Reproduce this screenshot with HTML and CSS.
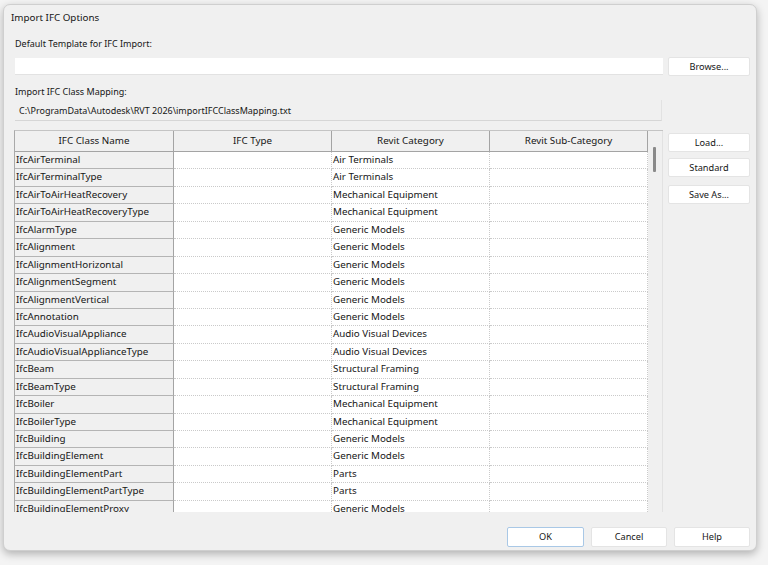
FILE: index.html
```html
<!DOCTYPE html>
<html>
<head>
<meta charset="utf-8">
<link rel="stylesheet" href="styles.css">
</head>
<body>
<div class="dialog">
  <div class="title">Import IFC Options</div>
  <div class="label first">Default Template for IFC Import:</div>
  <div class="input-row">
    <div class="input"></div>
    <div class="btn">Browse...</div>
  </div>
  <div class="label second">Import IFC Class Mapping:</div>
  <div class="path">C:\ProgramData\Autodesk\RVT 2026\importIFCClassMapping.txt</div>
  <div class="main">
    <div class="table-wrap">
      <div class="grid">
        <div class="h">IFC Class Name</div><div class="h">IFC Type</div><div class="h">Revit Category</div><div class="h">Revit Sub-Category</div>
        <div class="c1">IfcAirTerminal</div><div class="c"></div><div class="c">Air Terminals</div><div class="c"></div>
        <div class="c1">IfcAirTerminalType</div><div class="c"></div><div class="c">Air Terminals</div><div class="c"></div>
        <div class="c1">IfcAirToAirHeatRecovery</div><div class="c"></div><div class="c">Mechanical Equipment</div><div class="c"></div>
        <div class="c1">IfcAirToAirHeatRecoveryType</div><div class="c"></div><div class="c">Mechanical Equipment</div><div class="c"></div>
        <div class="c1">IfcAlarmType</div><div class="c"></div><div class="c">Generic Models</div><div class="c"></div>
        <div class="c1">IfcAlignment</div><div class="c"></div><div class="c">Generic Models</div><div class="c"></div>
        <div class="c1">IfcAlignmentHorizontal</div><div class="c"></div><div class="c">Generic Models</div><div class="c"></div>
        <div class="c1">IfcAlignmentSegment</div><div class="c"></div><div class="c">Generic Models</div><div class="c"></div>
        <div class="c1">IfcAlignmentVertical</div><div class="c"></div><div class="c">Generic Models</div><div class="c"></div>
        <div class="c1">IfcAnnotation</div><div class="c"></div><div class="c">Generic Models</div><div class="c"></div>
        <div class="c1">IfcAudioVisualAppliance</div><div class="c"></div><div class="c">Audio Visual Devices</div><div class="c"></div>
        <div class="c1">IfcAudioVisualApplianceType</div><div class="c"></div><div class="c">Audio Visual Devices</div><div class="c"></div>
        <div class="c1">IfcBeam</div><div class="c"></div><div class="c">Structural Framing</div><div class="c"></div>
        <div class="c1">IfcBeamType</div><div class="c"></div><div class="c">Structural Framing</div><div class="c"></div>
        <div class="c1">IfcBoiler</div><div class="c"></div><div class="c">Mechanical Equipment</div><div class="c"></div>
        <div class="c1">IfcBoilerType</div><div class="c"></div><div class="c">Mechanical Equipment</div><div class="c"></div>
        <div class="c1">IfcBuilding</div><div class="c"></div><div class="c">Generic Models</div><div class="c"></div>
        <div class="c1">IfcBuildingElement</div><div class="c"></div><div class="c">Generic Models</div><div class="c"></div>
        <div class="c1">IfcBuildingElementPart</div><div class="c"></div><div class="c">Parts</div><div class="c"></div>
        <div class="c1">IfcBuildingElementPartType</div><div class="c"></div><div class="c">Parts</div><div class="c"></div>
        <div class="c1">IfcBuildingElementProxy</div><div class="c"></div><div class="c">Generic Models</div><div class="c"></div>
      </div>
      <div class="scroll"><div class="thumb"></div></div>
    </div>
    <div class="side">
      <div class="btn">Load...</div>
      <div class="btn">Standard</div>
      <div class="btn">Save As...</div>
    </div>
  </div>
  <div class="bottom">
    <div class="btn wide ok">OK</div>
    <div class="btn wide">Cancel</div>
    <div class="btn wide">Help</div>
  </div>
</div>
</body>
</html>
```

FILE: styles.css
```css
html, body {
  margin: 0;
  padding: 0;
}
body {
  width: 768px;
  height: 565px;
  overflow: hidden;
  background: #f4f4f4;
  font-family: "Noto Sans", "Open Sans", sans-serif;
  font-size: 9px;
  color: #161616;
}
.dialog {
  margin: 4px 0 0 3px;
  width: 754px;
  height: 547px;
  box-sizing: border-box;
  background: #f0f0f0;
  border: 1px solid #cfcfcf;
  border-radius: 7px;
  box-shadow: 0 3px 8px rgba(0, 0, 0, 0.28);
  padding: 0 6px 0 11px;
  display: flex;
  flex-direction: column;
}
.title {
  height: 25px;
  line-height: 25px;
  margin-left: -4px;
  font-size: 9.8px;
}
.label {
  height: 16px;
  line-height: 16px;
}
.label.first { margin-top: 6px; }
.label.second { margin-top: 8px; }
.input-row {
  margin-top: 5px;
  height: 19px;
  display: flex;
  align-items: center;
  gap: 5px;
}
.input {
  width: 648px;
  height: 17px;
  background: #fff;
  border-bottom: 1px solid #e2e2e2;
  box-sizing: border-box;
}
.btn {
  width: 82px;
  height: 19px;
  box-sizing: border-box;
  background: #fff;
  border: 1px solid #e4e4e4;
  border-radius: 2px;
  text-align: center;
  line-height: 17px;
  font-size: 9.2px;
}
.path {
  width: 647px;
  height: 21px;
  line-height: 21px;
  box-sizing: border-box;
  padding-left: 4px;
  border-bottom: 1px solid #d6d6d6;
  border-right: 1px solid #e2e2e2;
}
.main {
  margin-top: 9px;
  height: 382px;
  display: flex;
  gap: 5px;
}
.table-wrap {
  margin-left: -1px;
  width: 649px;
  height: 382px;
  box-sizing: border-box;
  border-top: 1px solid #c4c4c4;
  border-left: 1px solid #a9a9a9;
  display: flex;
  overflow: hidden;
}
.grid {
  width: 633px;
  display: grid;
  grid-template-columns: 159px 158px 158px 158px;
  grid-template-rows: 21px;
  grid-auto-rows: 17.45px;
  align-content: start;
  background: #fff;
  font-size: 9.8px;
}
.grid > div {
  box-sizing: border-box;
  white-space: nowrap;
  overflow: hidden;
}
.h {
  background: #f0f0f0;
  border-right: 1px solid #a4a4a4;
  border-bottom: 1px solid #a4a4a4;
  text-align: center;
  line-height: 20px;
}
.c1 {
  background: #f0f0f0;
  border-right: 1px solid #a4a4a4;
  border-bottom: 1px solid #b4b4b4;
  padding-left: 1px;
  line-height: 16px;
}
.c {
  background: #fff;
  border-right: 1px dotted #cacaca;
  border-bottom: 1px dotted #cacaca;
  padding-left: 1px;
  line-height: 16px;
}
.scroll {
  width: 15px;
  background: #f0f0f0;
  border-right: 1px solid #e2e2e2;
  box-sizing: border-box;
  padding: 16px 0 0 5px;
}
.thumb {
  width: 3px;
  height: 25px;
  background: #8a8a8a;
  border-radius: 1px;
}
.side {
  display: flex;
  flex-direction: column;
  padding-top: 3px;
}
.side .btn:nth-child(2) { margin-top: 6px; }
.side .btn:nth-child(3) { margin-top: 8px; }
.bottom {
  margin-top: 15px;
  height: 20px;
  display: flex;
  justify-content: flex-end;
  gap: 7px;
}
.btn.wide {
  width: 76px;
  height: 20px;
  line-height: 18px;
}
.btn.ok {
  width: 77px;
  border-color: #a9c8e6;
}
```
